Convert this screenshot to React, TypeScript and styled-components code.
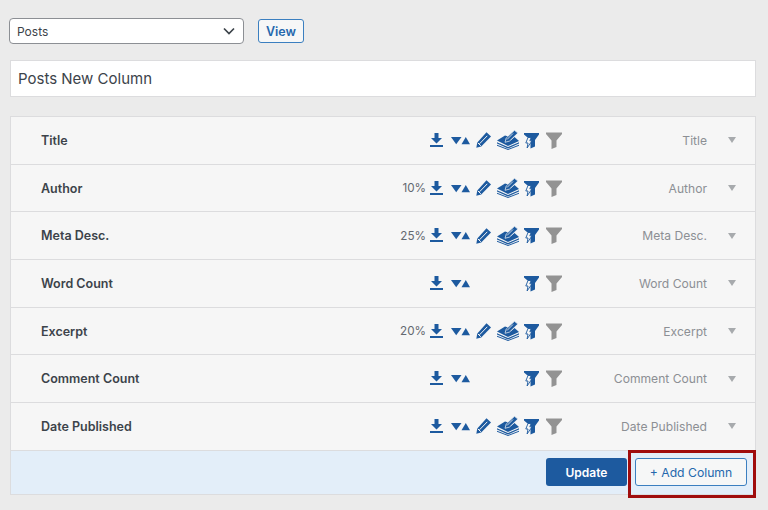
import * as React from "react";
import styled, { createGlobalStyle } from "styled-components";

const GlobalStyle = createGlobalStyle`
  html, body {
    margin: 0;
    background: #ebebeb;
    font-family: Inter, "Liberation Sans", sans-serif;
    color: #3c434a;
  }
`;

const Page = styled.div`
  width: 768px;
  height: 510px;
  overflow: hidden;
  padding: 18px 12px 0 9px;
  box-sizing: border-box;
`;

const Toolbar = styled.div`
  display: flex;
  align-items: center;
  gap: 14px;
`;

const Select = styled.div`
  width: 235px;
  height: 26px;
  box-sizing: border-box;
  display: flex;
  align-items: center;
  justify-content: space-between;
  padding: 0 8px 0 7px;
  background: #fff;
  border: 1px solid #8c8f94;
  border-radius: 4px;
  font-size: 12px;
`;

const ViewButton = styled.div`
  width: 46px;
  height: 24px;
  box-sizing: border-box;
  display: flex;
  align-items: center;
  justify-content: center;
  background: #f6f7f7;
  border: 1px solid #3b7fc0;
  border-radius: 3px;
  color: #2568ad;
  font-size: 12.5px;
  font-weight: 600;
`;

const TitleInput = styled.div`
  margin: 16px 0 19px 1px;
  height: 37px;
  box-sizing: border-box;
  display: flex;
  align-items: center;
  padding: 0 7px;
  background: #fff;
  border: 1px solid #dcdcde;
  font-size: 15px;
`;

const Table = styled.div`
  margin-left: 1px;
  width: 746px;
  border: 1px solid #dcdcde;
  box-sizing: border-box;
`;

const Row = styled.div`
  height: 47.7px;
  box-sizing: border-box;
  display: flex;
  align-items: center;
  padding: 0 19px 0 30px;
  background: #f6f6f6;
  border-bottom: 1px solid #dcdcde;
`;

const Name = styled.div`
  flex: 1;
  font-size: 12.5px;
  font-weight: 600;
`;

const Percent = styled.div`
  font-size: 11.7px;
  color: #646970;
  margin-right: 4px;
`;

const Icons = styled.div`
  display: flex;
  align-items: center;
  gap: 6px;
`;

const Label = styled.div`
  width: 145px;
  text-align: right;
  font-size: 12.1px;
  color: #8c8f94;
`;

const Caret = styled.div`
  margin-left: 21px;
  width: 0;
  height: 0;
  border-left: 4.5px solid transparent;
  border-right: 4.5px solid transparent;
  border-top: 6px solid #a7aaad;
`;

const Footer = styled.div`
  position: relative;
  height: 43px;
  display: flex;
  align-items: center;
  justify-content: flex-end;
  gap: 8px;
  padding: 0 8px 0 0;
  background: #e3eef9;
`;

const UpdateButton = styled.div`
  width: 81px;
  height: 28px;
  display: flex;
  align-items: center;
  justify-content: center;
  background: #1d5a9f;
  border-radius: 3px;
  color: #fff;
  font-size: 12px;
  font-weight: 600;
`;

const AddButton = styled.div`
  width: 112px;
  height: 28px;
  box-sizing: border-box;
  display: flex;
  align-items: center;
  justify-content: center;
  background: #f6f7f7;
  border: 1px solid #3b7fc0;
  border-radius: 3px;
  color: #2568ad;
  font-size: 12.2px;
`;

const Highlight = styled.div`
  position: absolute;
  right: -1px;
  top: -1px;
  width: 128px;
  height: 48px;
  box-sizing: border-box;
  border: 3px solid #a00d0d;
`;

const Svg = styled.svg<{ $hidden?: boolean; $left?: number }>`
  display: block;
  flex-shrink: 0;
  margin-left: ${(p) => p.$left ?? 0}px;
  visibility: ${(p) => (p.$hidden ? "hidden" : "visible")};
`;

const BLUE = "#1d5a9f";
const ROW_BG = "#f6f6f6";

const DownloadIcon = () => (
  <Svg width="13" height="15" viewBox="0 0 13 15" fill={BLUE}>
    <path d="M4.500 0h4v5h3.500L6.500 10.500 1 5h3.500z" />
    <rect x="0" y="12" width="13" height="2" />
  </Svg>
);

const SortIcon = () => (
  <Svg $left={2} width="19" height="9" viewBox="0 0 19 9" fill={BLUE}>
    <path d="M0 1h10.500L5.200 8.200z" />
    <path d="M10.500 8.200L14.800 1l4.200 7.200z" />
  </Svg>
);

const PencilIcon = ({ hidden }: { hidden?: boolean }) => (
  <Svg $hidden={hidden} width="15" height="16" viewBox="0 0 15 16" fill={BLUE}>
    <path d="M10.500 0.300l4.500 4.300L5.200 14.600 0.300 15.800l1-5.200z" />
    <path d="M3.500 11.800L11.300 3.800M1.800 10.800l3 3" stroke={ROW_BG} strokeWidth="1" fill="none" />
  </Svg>
);

const StackIcon = ({ hidden }: { hidden?: boolean }) => (
  <Svg $hidden={hidden} width="22" height="20" viewBox="0 0 22 20" fill={BLUE}>
    <path d="M0 10.500L8 5.500l5 1.500-3 4 4-1 3.500-3L22 11 11 16z" />
    <path d="M0 12.200l11 4.800 11-4.800v1.400L11 18.400 0 13.600z" />
    <path d="M0 14.700l11 4.300 11-4.300v1L11 20 0 15.700z" />
    <path d="M17.500 0.300l3.300 2.800-8.300 8-4.500 1.200 1.200-4.300z" stroke={ROW_BG} strokeWidth="0.700" />
    <path d="M10 9.500l6-6" stroke={ROW_BG} strokeWidth="0.800" />
  </Svg>
);

const BoltFunnelIcon = () => (
  <Svg $left={-1} width="15" height="17" viewBox="0 0 15 17" fill={BLUE}>
    <path d="M0 1h15v1.500L11 8v6.500l-4.500 2V8L0 2.500z" />
    <path d="M4 5.500L1.800 11H4l-.9 5L8 8.800H5.800l1.400-3.300z" fill={ROW_BG} stroke={BLUE} strokeWidth="0.900" />
  </Svg>
);

const FunnelIcon = () => (
  <Svg $left={1} width="16" height="17" viewBox="0 0 16 17" fill="#939393">
    <path d="M0 0.500h16v1.500L10.500 8.500v6.500L5.500 17V8.500L0 2z" />
  </Svg>
);

type Column = { name: string; percent?: string; editable: boolean };

const columns: Column[] = [
  { name: "Title", editable: true },
  { name: "Author", percent: "10%", editable: true },
  { name: "Meta Desc.", percent: "25%", editable: true },
  { name: "Word Count", editable: false },
  { name: "Excerpt", percent: "20%", editable: true },
  { name: "Comment Count", editable: false },
  { name: "Date Published", editable: true },
];

export default function App() {
  return (
    <Page>
      <GlobalStyle />
      <Toolbar>
        <Select>
          Posts
          <svg width="12" height="8" viewBox="0 0 12 8" fill="none" stroke="#3c434a" strokeWidth="1.700">
            <path d="M1 1.500l5 5 5-5" />
          </svg>
        </Select>
        <ViewButton>View</ViewButton>
      </Toolbar>
      <TitleInput>Posts New Column</TitleInput>
      <Table>
        {columns.map((c) => (
          <Row key={c.name}>
            <Name>{c.name}</Name>
            {c.percent && <Percent>{c.percent}</Percent>}
            <Icons>
              <DownloadIcon />
              <SortIcon />
              <PencilIcon hidden={!c.editable} />
              <StackIcon hidden={!c.editable} />
              <BoltFunnelIcon />
              <FunnelIcon />
            </Icons>
            <Label>{c.name}</Label>
            <Caret />
          </Row>
        ))}
        <Footer>
          <UpdateButton>Update</UpdateButton>
          <AddButton>+ Add Column</AddButton>
          <Highlight />
        </Footer>
      </Table>
    </Page>
  );
}
